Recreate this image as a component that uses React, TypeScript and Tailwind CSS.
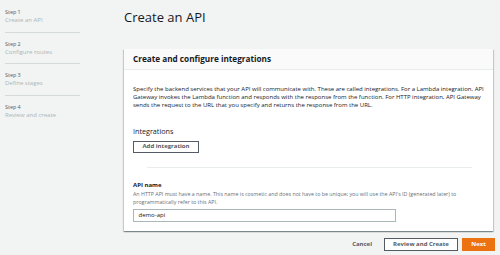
const steps = [
  { label: 'Step 1', name: 'Create an API' },
  { label: 'Step 2', name: 'Configure routes' },
  { label: 'Step 3', name: 'Define stages' },
  { label: 'Step 4', name: 'Review and create' },
];

function Sidebar() {
  return (
    <nav className="w-[124px] shrink-0 pl-[5px] pt-[1px]">
      <ul className="w-[75px]">
        {steps.map((step, i) => (
          <li
            key={step.label}
            className={
              i < steps.length - 1
                ? 'border-b border-[#d5dbdb] pt-[7px] pb-[6.7px]'
                : 'pt-[7px] pb-[6.7px]'
            }
          >
            <div className="text-[5.4px] leading-[8px] text-[#545b64]">{step.label}</div>
            <div className="text-[6px] leading-[9px] text-[#aab7b8]">{step.name}</div>
          </li>
        ))}
      </ul>
    </nav>
  );
}

function Card() {
  return (
    <section className="w-[369px] bg-white shadow-[0_1px_1px_0_rgba(0,28,36,0.3),1px_1px_1px_0_rgba(0,28,36,0.15),-1px_1px_1px_0_rgba(0,28,36,0.15)]">
      <header className="flex h-[21px] items-center border-b border-[#eaeded] bg-[#fafafa] px-[9px]">
        <h2 className="text-[8.2px] font-bold text-[#16191f]">Create and configure integrations</h2>
      </header>
      <div className="px-[9px] pt-[14.5px] pb-[9px]">
        <p className="text-[6px] leading-[8.3px] text-[#16191f]">
          Specify the backend services that your API will communicate with. These are called integrations. For a
          Lambda integration, API Gateway invokes the Lambda function and responds with the response from the
          function. For HTTP integration, API Gateway sends the request to the URL that you specify and returns the
          response from the URL.
        </p>
        <h3 className="mt-[17.75px] text-[7.2px] leading-[9px] text-[#16191f]">Integrations</h3>
        <button
          type="button"
          className="mt-[4.5px] flex h-[12px] w-[66px] items-center justify-center border border-[#545b64] bg-white text-[6px] font-bold text-[#545b64]"
        >
          Add integration
        </button>
        <div className="mt-[14px] ml-[14px] mr-[12px] border-t border-[#eaeded]" />
        <label className="mt-[13px] block text-[6px] font-bold leading-[8px] text-[#16191f]">API name</label>
        <p className="mt-[1px] pr-[10px] text-[5.3px] leading-[8px] text-[#687078]">
          An HTTP API must have a name. This name is cosmetic and does not have to be unique; you will use the API's ID
          (generated later) to programmatically refer to this API.
        </p>
        <div className="mt-[3px] flex h-[13px] w-[263px] items-center border border-[#aab7b8] px-[4.5px] text-[6px] text-[#16191f]">
          demo-api
        </div>
      </div>
    </section>
  );
}

export default function App() {
  return (
    <div
      className="flex h-[255px] w-[500px] overflow-hidden bg-[#f2f3f3]"
      style={{ fontFamily: '"Open Sans", "Noto Sans", sans-serif' }}
    >
      <Sidebar />
      <main className="flex-1 pt-[8.5px] pr-[7px]">
        <h1 className="text-[13px] leading-[16px] text-[#16191f]">Create an API</h1>
        <div className="mt-[24.5px]">
          <Card />
        </div>
        <div className="mt-[7px] flex items-center justify-end gap-[4px] -mr-[2px]">
          <button type="button" className="mr-[8px] text-[6px] font-bold text-[#545b64]">
            Cancel
          </button>
          <button
            type="button"
            className="flex h-[13px] w-[74px] items-center justify-center border border-[#545b64] bg-white text-[6px] font-bold text-[#545b64]"
          >
            Review and Create
          </button>
          <button
            type="button"
            className="flex h-[13px] w-[33px] items-center justify-center bg-[#ec7211] text-[6px] font-bold text-white"
          >
            Next
          </button>
        </div>
      </main>
    </div>
  );
}
